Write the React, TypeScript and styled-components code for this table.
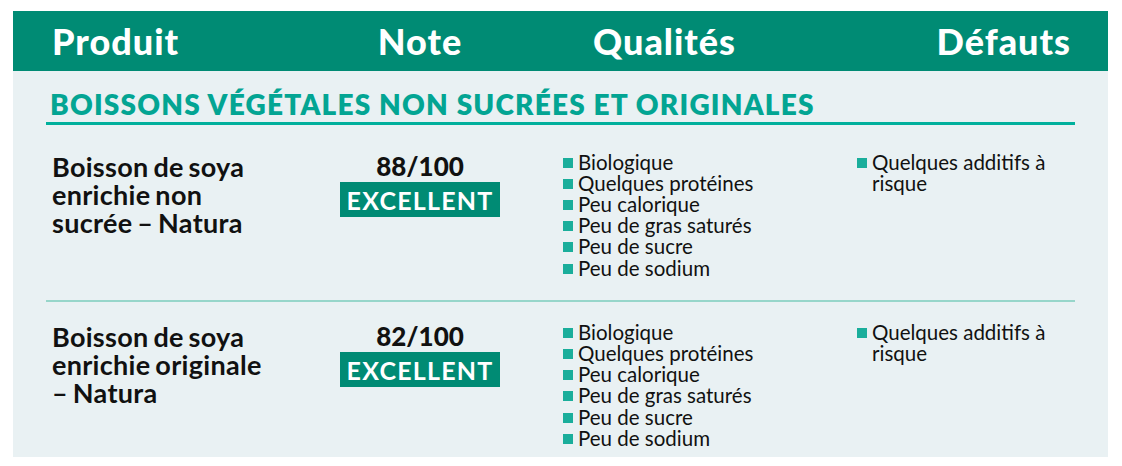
import styled, { createGlobalStyle } from "styled-components";

type Product = {
  name: string[];
  score: number;
  verdict: string;
  qualities: string[];
  defects: string[];
};

const products: Product[] = [
  {
    name: ["Boisson de soya", "enrichie non", "sucrée – Natura"],
    score: 88,
    verdict: "EXCELLENT",
    qualities: [
      "Biologique",
      "Quelques protéines",
      "Peu calorique",
      "Peu de gras saturés",
      "Peu de sucre",
      "Peu de sodium",
    ],
    defects: ["Quelques additifs à risque"],
  },
  {
    name: ["Boisson de soya", "enrichie originale", "– Natura"],
    score: 82,
    verdict: "EXCELLENT",
    qualities: [
      "Biologique",
      "Quelques protéines",
      "Peu calorique",
      "Peu de gras saturés",
      "Peu de sucre",
      "Peu de sodium",
    ],
    defects: ["Quelques additifs à risque"],
  },
];

export default function App() {
  return (
    <>
      <GlobalStyle />
      <Panel>
        <Header>
          <HeadCell>Produit</HeadCell>
          <HeadCell align="center">Note</HeadCell>
          <HeadCell indent>Qualités</HeadCell>
          <HeadCell align="right">Défauts</HeadCell>
        </Header>
        <Body>
          <SectionTitle>BOISSONS VÉGÉTALES NON SUCRÉES ET ORIGINALES</SectionTitle>
          {products.map((p) => (
            <Row key={p.name.join(" ")}>
              <Name>
                {p.name.map((line) => (
                  <NameLine key={line}>{line}</NameLine>
                ))}
              </Name>
              <Rating>
                <Score>{p.score}/100</Score>
                <Badge>{p.verdict}</Badge>
              </Rating>
              <List>
                {p.qualities.map((q) => (
                  <Item key={q}>{q}</Item>
                ))}
              </List>
              <List>
                {p.defects.map((d) => (
                  <Item key={d}>{d}</Item>
                ))}
              </List>
            </Row>
          ))}
        </Body>
      </Panel>
    </>
  );
}

const GlobalStyle = createGlobalStyle`
  html, body {
    margin: 0;
    padding: 0;
    background: #ffffff;
  }
  body {
    font-family: Lato, "Noto Sans", sans-serif;
    color: #111111;
  }
`;

const Panel = styled.div`
  margin: 11px 14px 0 13px;
  height: 446px;
  background: #e9f1f3;
  display: flex;
  flex-direction: column;
`;

const Header = styled.div`
  height: 60px;
  background: #008b74;
  padding: 0 33px;
  display: grid;
  grid-template-columns: 254px 263px 294px 1fr;
  align-items: center;
`;

const HeadCell = styled.div<{ align?: "center" | "right"; indent?: boolean }>`
  font-family: Lato, sans-serif;
  font-weight: 900;
  font-size: 36px;
  line-height: 40px;
  letter-spacing: 1px;
  color: #ffffff;
  text-align: ${(p) => p.align ?? "left"};
  padding-left: ${(p) => (p.indent ? "30px" : p.align ? "0" : "6px")};
  padding-right: ${(p) => (p.align === "center" ? "23px" : p.align === "right" ? "4px" : "0")};
`;

const Body = styled.div`
  padding: 0 33px;
`;

const SectionTitle = styled.h2`
  margin: 18px 0 7px;
  padding: 0 0 3px 4px;
  border-bottom: 3px solid #00b09c;
  font-family: Lato, sans-serif;
  font-weight: 800;
  font-size: 28px;
  line-height: 30px;
  letter-spacing: 1.2px;
  color: #03a593;
`;

const Row = styled.div`
  display: grid;
  grid-template-columns: 254px 263px 294px 1fr;
  align-items: start;
  padding: 20px 0 21px;
  border-bottom: 2px solid #97d6ca;

  &:last-child {
    border-bottom: none;
    padding-bottom: 8px;
  }
`;

const Name = styled.div`
  padding: 1px 0 0 6px;
  font-weight: 700;
  font-size: 27px;
  line-height: 28px;
  letter-spacing: 0.3px;
  word-spacing: -2px;
`;

const NameLine = styled.div`
  white-space: nowrap;
`;

const Rating = styled.div`
  padding-right: 23px;
  display: flex;
  flex-direction: column;
  align-items: center;
`;

const Score = styled.div`
  font-weight: 900;
  font-size: 26px;
  line-height: 28px;
`;

const Badge = styled.div`
  margin-top: 2px;
  height: 35px;
  padding: 0 7px;
  background: #008b74;
  color: #ffffff;
  font-weight: 700;
  font-size: 25px;
  line-height: 36px;
  letter-spacing: 1.2px;
`;

const List = styled.ul`
  margin: 0;
  padding: 0;
  list-style: none;
`;

const Item = styled.li`
  position: relative;
  padding-left: 15px;
  max-width: 180px;
  font-size: 20.5px;
  line-height: 21.2px;

  &::before {
    content: "";
    position: absolute;
    left: 0;
    top: 6px;
    width: 10px;
    height: 10px;
    background: #1aae9b;
  }
`;
